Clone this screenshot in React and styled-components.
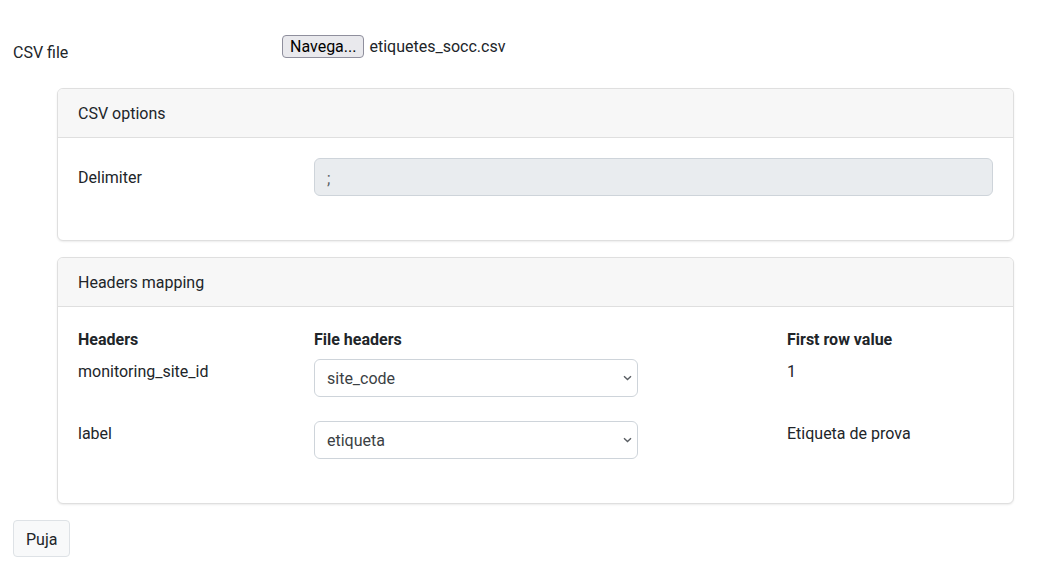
import React from 'react';
import styled, { createGlobalStyle } from 'styled-components';

const GlobalStyle = createGlobalStyle`
    * {
        box-sizing: border-box;
    }
    body {
        margin: 0;
        background: #ffffff;
        color: #212529;
        font-family: Roboto, "Liberation Sans", sans-serif;
        font-size: 16px;
        line-height: 24px;
    }
`;

const Page = styled.div`
    padding: 33px 50px 20px 13px;
`;

const FileRow = styled.div`
    display: flex;
    align-items: flex-start;
    margin-bottom: 23px;
`;

const FileLabel = styled.label`
    width: 269px;
    padding-top: 8px;
`;

const FilePicker = styled.div`
    display: flex;
    align-items: center;
    margin-top: 2px;
`;

const FileButton = styled.span`
    display: inline-block;
    background: #e9e9ed;
    border: 1px solid #8f8f9d;
    border-radius: 4px;
    color: #000000;
    padding: 1px 7px 0 7px;
    line-height: 20px;
`;

const FileName = styled.span`
    margin-left: 5px;
    line-height: 20px;
`;

const Card = styled.section`
    margin-left: 44px;
    margin-bottom: 16px;
    border: 1px solid #dfdfdf;
    border-radius: 6px;
    box-shadow: 0 1px 2px rgba(0, 0, 0, 0.08);
    background: #ffffff;
    overflow: hidden;
`;

const CardHeader = styled.div`
    background: #f7f7f7;
    border-bottom: 1px solid #dfdfdf;
    padding: 13px 20px 11px 20px;
`;

const CardBody = styled.div`
    padding: 20px;
`;

const FieldRow = styled.div`
    display: flex;
    align-items: center;
    margin-bottom: 24px;
`;

const FieldLabel = styled.div`
    width: 236px;
    flex-shrink: 0;
    padding-top: 2px;
`;

const TextInput = styled.div`
    flex: 1;
    height: 38px;
    padding: 8px 12px 6px 12px;
    border: 1px solid #ced4da;
    border-radius: 6px;
    background: #e9ecef;
    color: #555b61;
`;

const MappingGrid = styled.div`
    display: grid;
    grid-template-columns: 236px 473px 1fr;
    margin-bottom: 24px;
`;

const HeadCell = styled.div`
    font-weight: 700;
    padding-top: 1px;
    margin-bottom: 7px;
`;

const Cell = styled.div`
    padding-top: 1px;
    margin-bottom: ${p => (p.last ? '0' : '24px')};
`;

const Select = styled.div`
    position: relative;
    width: 324px;
    height: 38px;
    padding: 7px 12px 5px 12px;
    border: 1px solid #ced4da;
    border-radius: 6px;
    background: #ffffff;
    color: #3b3f44;
    margin-bottom: ${p => (p.last ? '0' : '24px')};
`;

const Chevron = styled.svg`
    position: absolute;
    right: 5px;
    top: 15px;
    width: 9px;
    height: 6px;
`;

const SubmitButton = styled.button`
    font: inherit;
    color: #212529;
    background: #f8f9fa;
    border: 1px solid #dee2e6;
    border-radius: 4px;
    padding: 7px 12px 5px 12px;
    line-height: 23px;
    cursor: pointer;
`;

const mapping = [
    { header: 'monitoring_site_id', file: 'site_code', value: '1' },
    { header: 'label', file: 'etiqueta', value: 'Etiqueta de prova' },
];

function SelectBox({ value, last }) {
    return (
        <Select last={last}>
            {value}
            <Chevron viewBox="0 0 9 6">
                <path d="M1 1.2 L4.5 4.6 L8 1.2" fill="none" stroke="#5a5e63" strokeWidth="1.4" />
            </Chevron>
        </Select>
    );
}

export default function App() {
    return (
        <>
            <GlobalStyle />
            <Page>
                <FileRow>
                    <FileLabel>CSV file</FileLabel>
                    <FilePicker>
                        <FileButton>Navega...</FileButton>
                        <FileName>etiquetes_socc.csv</FileName>
                    </FilePicker>
                </FileRow>

                <Card>
                    <CardHeader>CSV options</CardHeader>
                    <CardBody>
                        <FieldRow>
                            <FieldLabel>Delimiter</FieldLabel>
                            <TextInput>;</TextInput>
                        </FieldRow>
                    </CardBody>
                </Card>

                <Card>
                    <CardHeader>Headers mapping</CardHeader>
                    <CardBody>
                        <MappingGrid>
                            <HeadCell>Headers</HeadCell>
                            <HeadCell>File headers</HeadCell>
                            <HeadCell>First row value</HeadCell>
                            {mapping.map((m, i) => {
                                const last = i === mapping.length - 1;
                                return (
                                    <React.Fragment key={m.header}>
                                        <Cell last={last}>{m.header}</Cell>
                                        <div>
                                            <SelectBox value={m.file} last={last} />
                                        </div>
                                        <Cell last={last}>{m.value}</Cell>
                                    </React.Fragment>
                                );
                            })}
                        </MappingGrid>
                    </CardBody>
                </Card>

                <SubmitButton>Puja</SubmitButton>
            </Page>
        </>
    );
}
